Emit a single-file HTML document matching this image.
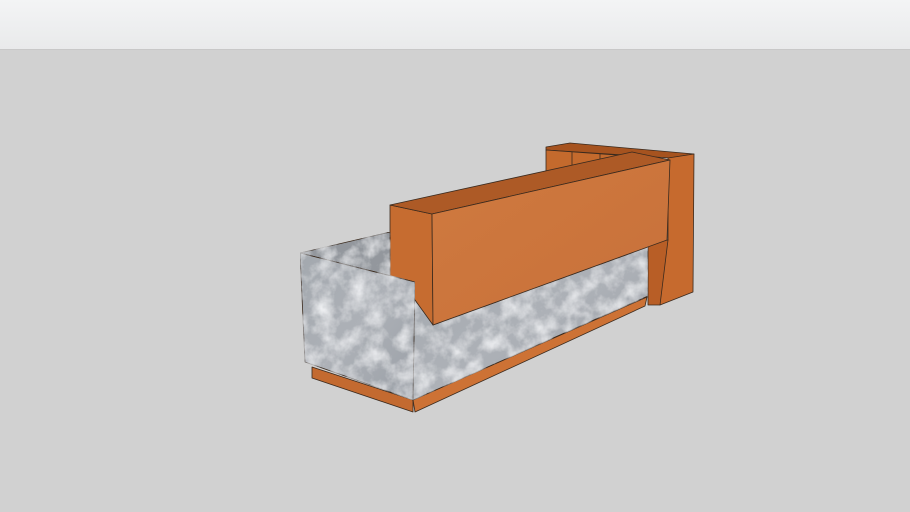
<!DOCTYPE html>
<html><head><style>
html,body{margin:0;padding:0;width:910px;height:512px;overflow:hidden;background:#d1d1d1}
.top{position:absolute;left:0;top:0;width:910px;height:49px;background:linear-gradient(#f3f4f5,#e9eaeb);border-bottom:1px solid #c8c8c8}
svg{position:absolute;left:0;top:0}
</style></head><body>
<div class="top"></div>
<svg width="910" height="512" viewBox="0 0 910 512">
<defs>
<linearGradient id="w" x1="0" y1="0" x2="1" y2="1"><stop offset="0" stop-color="#cf7a3f"/><stop offset="1" stop-color="#c8703a"/></linearGradient>
<linearGradient id="m" x1="0" y1="0" x2="1" y2="1"><stop offset="0" stop-color="#a3a8ae"/><stop offset=".5" stop-color="#adb1b7"/><stop offset="1" stop-color="#9a9fa6"/></linearGradient>
<filter id="t" x="0" y="0" width="1" height="1"><feTurbulence type="fractalNoise" baseFrequency="0.06" numOctaves="4" seed="4"/><feColorMatrix type="matrix" values="0 0 0 0 0.9 0 0 0 0 0.91 0 0 0 0 0.93 1.6 0 0 0 -0.6"/><feComposite in2="SourceGraphic" operator="in"/><feMerge><feMergeNode in="SourceGraphic"/><feMergeNode/></feMerge></filter>
</defs>
<g stroke="#3a2a1e" stroke-width=".8" stroke-linejoin="round">
<polygon points="546,147 570,143 694,154 670,158 546,150" fill="#a6531f"/>
<polygon points="546,150 630,156 630,175 546,175" fill="#c46a2d"/>
<line x1="572" y1="152" x2="572" y2="170"/><line x1="600" y1="154" x2="600" y2="166"/>
<polygon points="668,158 694,154 693,292 660,305 660,242 668,240" fill="#c66a2e"/>
<polygon points="648,242 668,240 660,305 648,305" fill="#b85e26"/>
<polygon points="312,367 413,400 413,412 312,378" fill="#c36a30"/>
<polygon points="413,400 647,297 645,306 415,412" fill="#cd7235"/>
<polygon points="413,290 433,325 648,247 648,296 413,400" fill="url(#m)" filter="url(#t)"/>
<polygon points="390,205 432,214 433,325 415,300 390,276" fill="#c66c30"/>
<polygon points="300,253 390,232 390,276 415,282" fill="#93979d" filter="url(#t)"/>
<polygon points="300,253 415,282 413,400 305,362" fill="url(#m)" filter="url(#t)"/>
<polygon points="390,205 432,214 670,160 632,152" fill="#ad5a26"/>
<polygon points="432,214 670,160 667,240 433,325" fill="url(#w)"/>
</g>
</svg>
</body></html>
